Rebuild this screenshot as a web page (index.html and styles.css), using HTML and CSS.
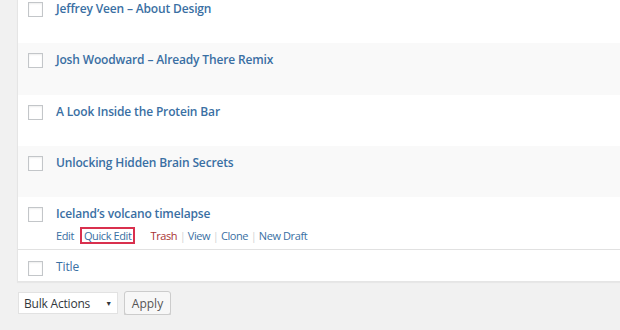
FILE: index.html
```html
<!DOCTYPE html>
<html>
<head>
<meta charset="utf-8">
<link rel="stylesheet" href="styles.css">
</head>
<body>
<div class="wrap">
  <div class="table">
    <div class="row">
      <span class="cb"></span>
      <div class="cell">
        <a class="title">Jeffrey Veen – About Design</a>
      </div>
    </div>
    <div class="row alt">
      <span class="cb"></span>
      <div class="cell">
        <a class="title">Josh Woodward – Already There Remix</a>
      </div>
    </div>
    <div class="row">
      <span class="cb"></span>
      <div class="cell">
        <a class="title">A Look Inside the Protein Bar</a>
      </div>
    </div>
    <div class="row alt">
      <span class="cb"></span>
      <div class="cell">
        <a class="title">Unlocking Hidden Brain Secrets</a>
      </div>
    </div>
    <div class="row">
      <span class="cb"></span>
      <div class="cell">
        <a class="title">Iceland’s volcano timelapse</a>
        <div class="actions">
          <a class="act">Edit</a>
          <a class="act quick">Quick Edit</a>
          <a class="act trash">Trash</a><span class="sep">|</span><a class="act">View</a><span class="sep">|</span><a class="act">Clone</a><span class="sep">|</span><a class="act">New Draft</a>
        </div>
      </div>
    </div>
    <div class="row foot">
      <span class="cb"></span>
      <div class="cell">
        <a class="col-title">Title</a>
      </div>
    </div>
  </div>
  <div class="bulk">
    <div class="select">
      <span>Bulk Actions</span>
      <span class="arrow">▼</span>
    </div>
    <button class="apply">Apply</button>
  </div>
</div>
</body>
</html>
```

FILE: styles.css
```css
html, body {
  margin: 0;
  padding: 0;
}
body {
  background: #f1f1f1;
  font-family: "Open Sans", "Noto Sans", sans-serif;
  overflow: hidden;
}
.wrap {
  padding-left: 17px;
}
.table {
  margin-top: -8px;
  width: 640px;
  background: #fff;
  border: 1px solid #e5e5e5;
  border-top: none;
  box-shadow: 0 1px 1px rgba(0, 0, 0, 0.04);
}
.row {
  display: flex;
  align-items: flex-start;
  height: 51.3px;
  padding-top: 10px;
  box-sizing: border-box;
  background: #fff;
}
.row.alt {
  background: #f9f9f9;
}
.row.foot {
  height: 32px;
  padding-top: 11px;
  border-top: 1px solid #e1e1e1;
  margin-top: 1px;
}
.cb {
  flex: none;
  width: 15px;
  height: 15px;
  box-sizing: border-box;
  margin-left: 10px;
  margin-right: 13px;
  border: 1px solid #c3c6c9;
  background: #fff;
  box-shadow: inset 0 1px 2px rgba(0, 0, 0, 0.07);
}
.cell {
  display: flex;
  flex-direction: column;
}
.title {
  color: #3a6fa3;
  font-weight: 600;
  font-size: 12px;
  letter-spacing: -0.15px;
  line-height: 16px;
  margin-top: -1px;
}
.col-title {
  color: #3a6fa3;
  font-size: 12px;
  letter-spacing: -0.1px;
  line-height: 16px;
  margin-top: -2px;
}
.actions {
  display: flex;
  align-items: center;
  margin-top: 5px;
  font-size: 11px;
  letter-spacing: -0.4px;
  line-height: 13px;
  color: #3a6fa3;
}
.act {
  color: #3a6fa3;
}
.act.quick {
  margin-left: 6px;
  margin-right: 15px;
  padding: 0 2px;
  border: 2px solid #d9304e;
}
.act.trash {
  color: #a83232;
}
.sep {
  color: #d4d4d4;
  margin: 0 2.5px;
}
.bulk {
  display: flex;
  align-items: center;
  gap: 6px;
  margin-top: 9px;
  padding-left: 1px;
}
.select {
  width: 100px;
  height: 22px;
  box-sizing: border-box;
  background: #fff;
  border: 1px solid #e2e2e2;
  display: flex;
  align-items: center;
  justify-content: space-between;
  padding: 0 5px 0 5px;
  font-size: 12px;
  letter-spacing: -0.2px;
  color: #32373c;
}
.arrow {
  font-size: 7px;
  color: #32373c;
}
.apply {
  height: 24px;
  width: 47px;
  box-sizing: border-box;
  background: #f7f7f7;
  border: 1px solid #ccc;
  border-radius: 3px;
  box-shadow: 0 1px 0 #ccc;
  font-family: inherit;
  font-size: 12px;
  color: #555;
  padding: 0;
}
```
